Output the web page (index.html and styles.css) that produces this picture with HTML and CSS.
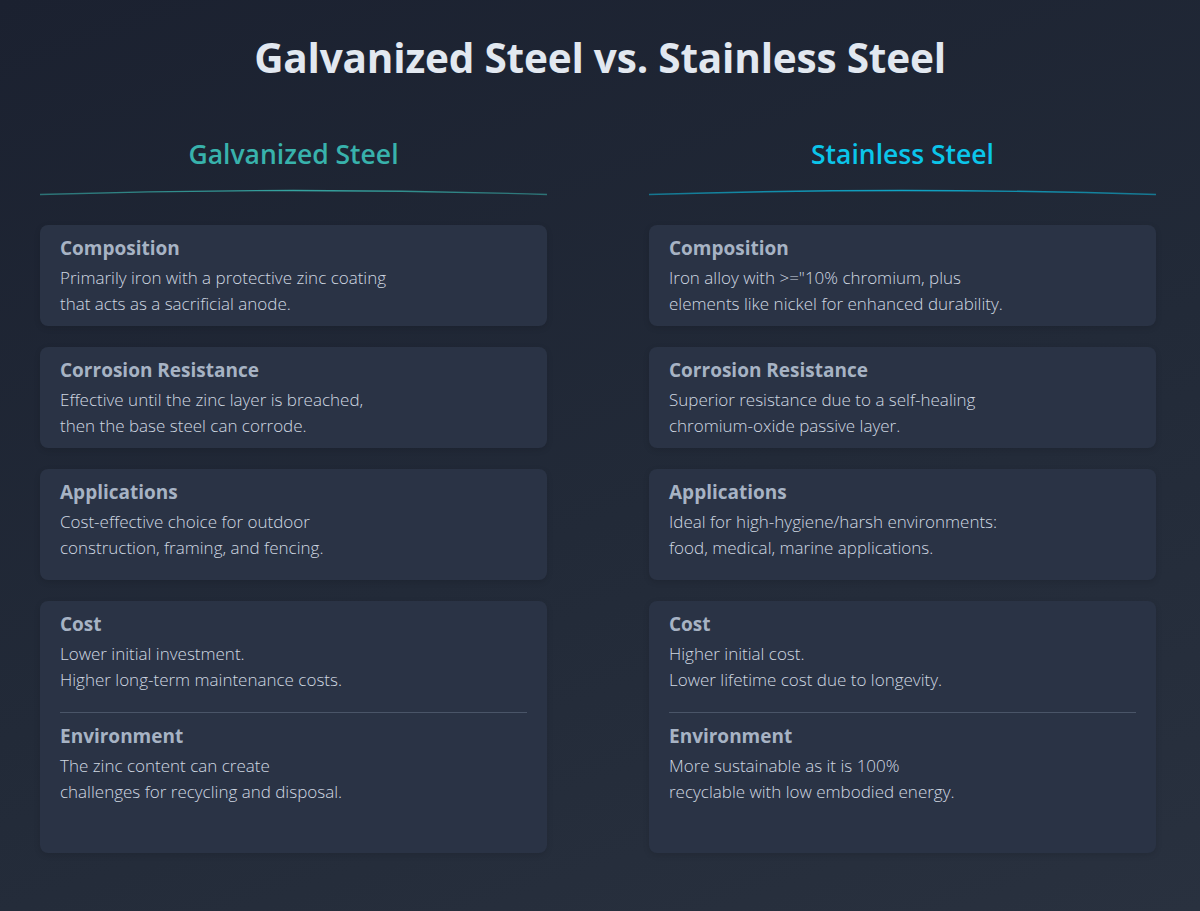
FILE: index.html
```html
<!DOCTYPE html>
<html lang="en">
<head>
<meta charset="utf-8">
<title>Galvanized Steel vs. Stainless Steel</title>
<link rel="stylesheet" href="styles.css">
</head>
<body>
<main class="page">
  <h1 class="title">Galvanized Steel vs. Stainless Steel</h1>
  <div class="columns">
    <section class="column column--galv">
      <h2 class="column-title">Galvanized Steel</h2>
      <svg class="arc" viewBox="0 0 507 8" preserveAspectRatio="none" aria-hidden="true">
        <defs>
          <linearGradient id="arcGalv" x1="0" x2="1" y1="0" y2="0">
            <stop offset="0" stop-color="#38b2ac" stop-opacity="0.55"/>
            <stop offset="0.5" stop-color="#38b2ac" stop-opacity="0.9"/>
            <stop offset="1" stop-color="#38b2ac" stop-opacity="0.55"/>
          </linearGradient>
        </defs>
        <path d="M0 6.5 Q253.5 -1.5 507 6.5" fill="none" stroke="url(#arcGalv)" stroke-width="1.4"/>
      </svg>
      <div class="cards">
        <div class="card">
          <h3 class="card-title">Composition</h3>
          <p class="card-text">Primarily iron with a protective zinc coating<br>that acts as a sacrificial anode.</p>
        </div>
        <div class="card">
          <h3 class="card-title">Corrosion Resistance</h3>
          <p class="card-text">Effective until the zinc layer is breached,<br>then the base steel can corrode.</p>
        </div>
        <div class="card card--tall">
          <h3 class="card-title">Applications</h3>
          <p class="card-text">Cost-effective choice for outdoor<br>construction, framing, and fencing.</p>
        </div>
        <div class="card card--split">
          <div class="card-part">
            <h3 class="card-title">Cost</h3>
            <p class="card-text">Lower initial investment.<br>Higher long-term maintenance costs.</p>
          </div>
          <div class="card-part">
            <h3 class="card-title">Environment</h3>
            <p class="card-text">The zinc content can create<br>challenges for recycling and disposal.</p>
          </div>
        </div>
      </div>
    </section>
    <section class="column column--stain">
      <h2 class="column-title">Stainless Steel</h2>
      <svg class="arc" viewBox="0 0 507 8" preserveAspectRatio="none" aria-hidden="true">
        <defs>
          <linearGradient id="arcStain" x1="0" x2="1" y1="0" y2="0">
            <stop offset="0" stop-color="#0bc5ea" stop-opacity="0.5"/>
            <stop offset="0.5" stop-color="#0bc5ea" stop-opacity="0.8"/>
            <stop offset="1" stop-color="#0bc5ea" stop-opacity="0.5"/>
          </linearGradient>
        </defs>
        <path d="M0 6.5 Q253.5 -1.5 507 6.5" fill="none" stroke="url(#arcStain)" stroke-width="1.4"/>
      </svg>
      <div class="cards">
        <div class="card">
          <h3 class="card-title">Composition</h3>
          <p class="card-text">Iron alloy with &gt;=&quot;10% chromium, plus<br>elements like nickel for enhanced durability.</p>
        </div>
        <div class="card">
          <h3 class="card-title">Corrosion Resistance</h3>
          <p class="card-text">Superior resistance due to a self-healing<br>chromium-oxide passive layer.</p>
        </div>
        <div class="card card--tall">
          <h3 class="card-title">Applications</h3>
          <p class="card-text">Ideal for high-hygiene/harsh environments:<br>food, medical, marine applications.</p>
        </div>
        <div class="card card--split">
          <div class="card-part">
            <h3 class="card-title">Cost</h3>
            <p class="card-text">Higher initial cost.<br>Lower lifetime cost due to longevity.</p>
          </div>
          <div class="card-part">
            <h3 class="card-title">Environment</h3>
            <p class="card-text">More sustainable as it is 100%<br>recyclable with low embodied energy.</p>
          </div>
        </div>
      </div>
    </section>
  </div>
</main>
</body>
</html>
```

FILE: styles.css
```css
* { box-sizing: border-box; }

html, body {
  margin: 0;
  padding: 0;
}

body {
  width: 1200px;
  height: 911px;
  overflow: hidden;
  background: linear-gradient(160deg, #1b2130 0%, #222a38 55%, #29313f 100%);
  font-family: "Open Sans", "Noto Sans", "Liberation Sans", sans-serif;
  color: #cbd5e0;
}

.page {
  padding: 32px 40px 0;
}

.title {
  margin: 0;
  text-align: center;
  font-size: 40.5px;
  line-height: 52px;
  font-weight: 700;
  color: #e2e8f0;
  letter-spacing: -0.2px;
}

.columns {
  display: grid;
  grid-template-columns: 507px 507px;
  column-gap: 102px;
  margin-top: 54px;
}

.column-title {
  margin: 0;
  text-align: center;
  font-size: 26.5px;
  line-height: 32px;
  font-weight: 600;
}

.column--galv .column-title { color: #38b2ac; }
.column--stain .column-title { color: #0bc5ea; }

.arc {
  display: block;
  width: 100%;
  height: 8px;
  margin-top: 18px;
}

.cards {
  display: flex;
  flex-direction: column;
  gap: 21px;
  margin-top: 29px;
}

.card {
  background: #2a3345;
  border-radius: 8px;
  padding: 10px 20px 9px;
  box-shadow: 0 2px 6px rgba(0, 0, 0, 0.12);
}

.card--tall {
  padding-bottom: 19px;
}

.card--split {
  padding-bottom: 48px;
}

.card-part + .card-part {
  border-top: 1px solid #4a5568;
  margin-top: 19px;
  padding-top: 10px;
}

.card-title {
  margin: 0 0 4px;
  font-size: 19px;
  line-height: 26px;
  font-weight: 700;
  color: #a7b3c4;
}

.card-text {
  margin: 0;
  font-size: 17px;
  line-height: 26px;
  font-weight: 300;
  color: #d0d8e2;
}
```
